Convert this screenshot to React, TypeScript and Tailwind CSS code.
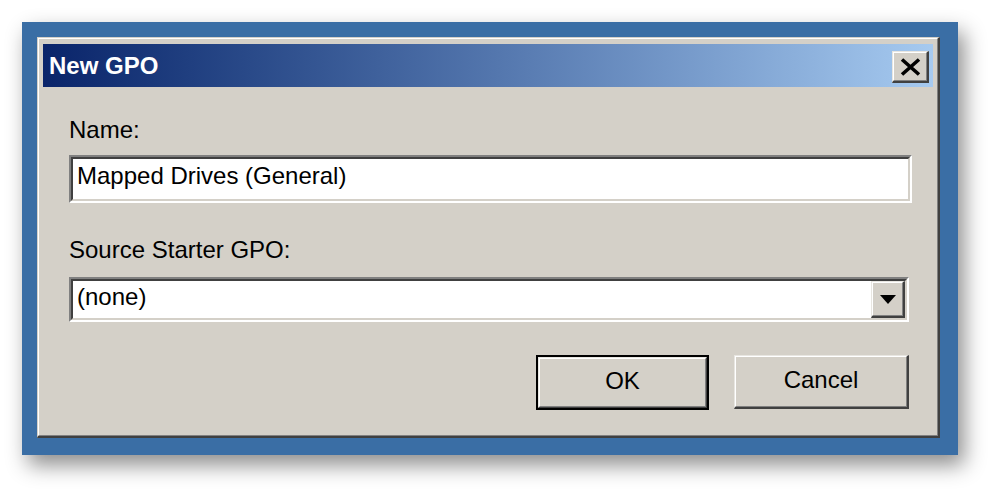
import React from 'react'

const font = { fontFamily: '"Liberation Sans", Arial, sans-serif' }

// Classic Win9x raised bevel: outer light/dark, inner white/grey
function Raised({ className = '', children }: { className?: string; children?: React.ReactNode }) {
  return (
    <div className={`border border-t-[#e8e6e1] border-l-[#e8e6e1] border-r-[#404040] border-b-[#404040] ${className}`}>
      <div className="w-full h-full border border-t-white border-l-white border-r-[#808080] border-b-[#808080] bg-[#d4d0c8] flex items-center justify-center">
        {children}
      </div>
    </div>
  )
}

function Sunken({ className = '', children }: { className?: string; children?: React.ReactNode }) {
  return (
    <div className={`border-2 border-t-[#808080] border-l-[#808080] border-r-white border-b-white ${className}`}>
      <div className="w-full h-full border-2 border-t-[#404040] border-l-[#404040] border-r-[#d4d0c8] border-b-[#d4d0c8] bg-white flex">
        {children}
      </div>
    </div>
  )
}

export default function App() {
  return (
    <div className="min-h-screen bg-white pl-[22px] pt-[22px]" style={font}>
      <div className="w-[936px] h-[433px] bg-[#3a6ea5] pl-[15px] pt-[15px] shadow-[6px_10px_20px_rgba(0,0,0,0.45)]">
        {/* Dialog */}
        <div className="w-[903px] h-[401px] border border-t-[#d4d0c8] border-l-[#d4d0c8] border-r-[#404040] border-b-[#404040] border-r-2 border-b-2">
          <div className="w-full h-full border border-t-white border-l-white border-r-[#808080] border-b-[#808080] bg-[#d4d0c8] px-[4px] pt-[5px]">
            {/* Title bar */}
            <div className="h-[43px] flex items-center justify-between pl-[6px] pr-[4px] bg-gradient-to-r from-[#0a246a] to-[#a6caf0]">
              <span className="text-white font-bold text-[24px] leading-[28px]">New GPO</span>
              <Raised className="w-[37px] h-[32px] mt-[3px] border-r-2 border-b-2">
                <svg width="21" height="18" viewBox="0 0 21 18">
                  <path d="M2 1.5 L19 16.5 M19 1.5 L2 16.5" stroke="#000" strokeWidth="3.6" strokeLinecap="butt" />
                </svg>
              </Raised>
            </div>

            {/* Body */}
            <div className="pl-[26px] text-black text-[24px] leading-[28px]">
              <div className="mt-[29px]">Name:</div>
              <Sunken className="mt-[11px] w-[843px] h-[48px]">
                <span className="pl-[4px] pt-[3px]">Mapped Drives (General)</span>
              </Sunken>

              <div className="mt-[33px]">Source Starter GPO:</div>
              <Sunken className="mt-[13px] w-[840px] h-[45px]">
                <span className="flex-1 pl-[4px] pt-[2px]">(none)</span>
                <Raised className="w-[34px] h-full border-r-2 border-b-2">
                  <svg width="16" height="9" viewBox="0 0 16 9">
                    <path d="M0 0 H16 L8 9 Z" fill="#000" />
                  </svg>
                </Raised>
              </Sunken>

              <div className="mt-[33px] w-[840px] flex justify-end gap-[25px]">
                <div className="w-[173px] h-[55px] border-2 border-black">
                  <Raised className="w-full h-full">
                    <span className="pb-[4px]">OK</span>
                  </Raised>
                </div>
                <Raised className="w-[175px] h-[54px] border-r-2 border-b-2">
                  <span className="pb-[4px]">Cancel</span>
                </Raised>
              </div>
            </div>
          </div>
        </div>
      </div>
    </div>
  )
}
